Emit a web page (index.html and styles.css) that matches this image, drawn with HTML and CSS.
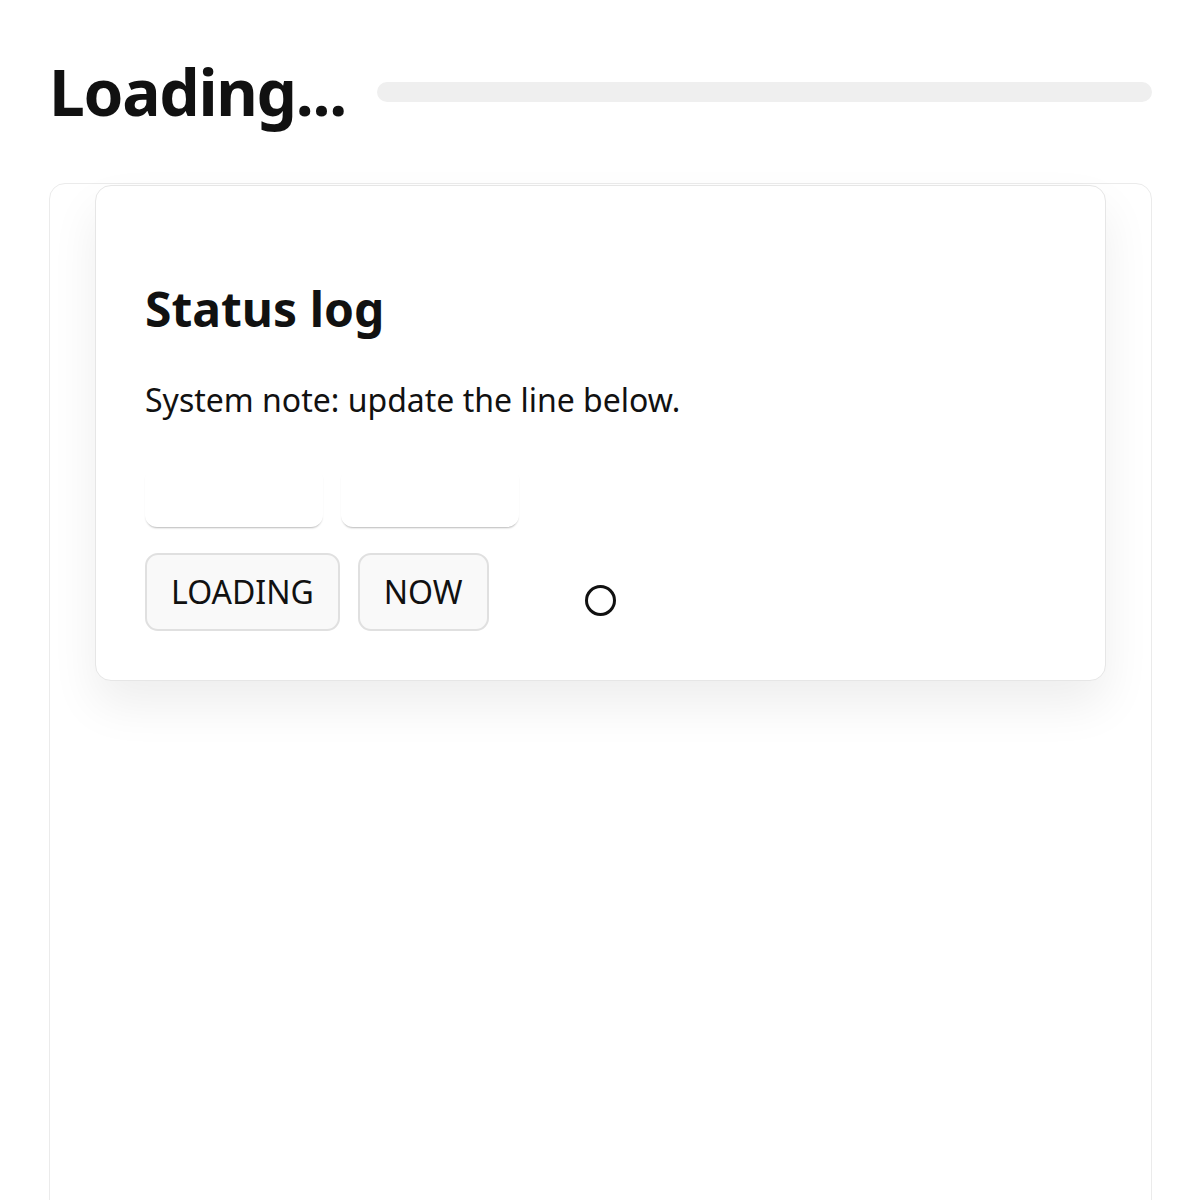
FILE: index.html
```html
<!DOCTYPE html>
<html lang="en">
<head>
  <meta charset="UTF-8" />
  <meta name="viewport" content="width=device-width, initial-scale=1.0"/>
  <title>Status log</title>
  <link rel="stylesheet" href="styles.css">
</head>
<body>
  <div class="page">
    <header class="top-bar">
      <h1>Loading...</h1>
      <div class="progress"></div>
    </header>

    <main class="panel">
      <section class="dialog">
        <h2>Status log</h2>
        <p>System note: update the line below.</p>

        <div class="ghost-row">
          <button class="ghost-btn"></button>
          <button class="ghost-btn"></button>
        </div>

        <div class="action-row">
          <button class="chip-btn">LOADING</button>
          <button class="chip-btn">NOW</button>
        </div>
      </section>
    </main>
  </div>

  <div class="spinner"></div>
</body>
</html>
```

FILE: styles.css
```css
* {
  box-sizing: border-box;
}

body {
  font-family: "Noto Sans", sans-serif;
  background: #fff;
  color: #111;
  margin: 0;
  padding: 0;
}

.page {
  padding: 48px 48px 0 49px;
}

.top-bar {
  display: flex;
  align-items: center;
  gap: 31px;
  height: 88px;
  margin-bottom: 47px;
}

.top-bar h1 {
  margin: 0;
  font-size: 64px;
  font-weight: 700;
  line-height: 1;
  letter-spacing: -0.02em;
  white-space: nowrap;
}

.progress {
  flex: 1;
  height: 20px;
  border-radius: 10px;
  background: #efefef;
}

.panel {
  position: relative;
  min-height: 1100px;
  border: 1px solid #ebebeb;
  border-radius: 16px;
}

.dialog {
  position: absolute;
  top: 1px;
  left: 45px;
  right: 45px;
  padding: 48px 49px 49px;
  background: #fff;
  border: 1px solid #e6e6e6;
  border-radius: 16px;
  box-shadow: 0 24px 48px rgba(0, 0, 0, 0.07);
}

.dialog h2 {
  margin: 46px 0 0;
  font-size: 48px;
  font-weight: 700;
  line-height: 1.2;
}

.dialog p {
  margin: 38px 0 0;
  font-size: 32px;
  line-height: 1.5;
}

.ghost-row,
.action-row {
  display: flex;
  gap: 18px;
}

.ghost-row {
  margin-top: 43px;
}

.ghost-btn {
  width: 178px;
  height: 60px;
  border: none;
  border-radius: 12px;
  background: #fff;
  box-shadow: 0 2px 2px -1px rgba(0, 0, 0, 0.28);
}

.action-row {
  margin-top: 26px;
}

.chip-btn {
  height: 78px;
  padding: 0 24px;
  font-family: inherit;
  font-size: 32px;
  color: #111;
  background: #f9f9f9;
  border: 2px solid #e0e0e0;
  border-radius: 13px;
}

.spinner {
  position: fixed;
  top: 50%;
  left: 50%;
  width: 31px;
  height: 31px;
  margin: -15px 0 0 -15px;
  border: 3px solid #111;
  border-radius: 50%;
}
```
